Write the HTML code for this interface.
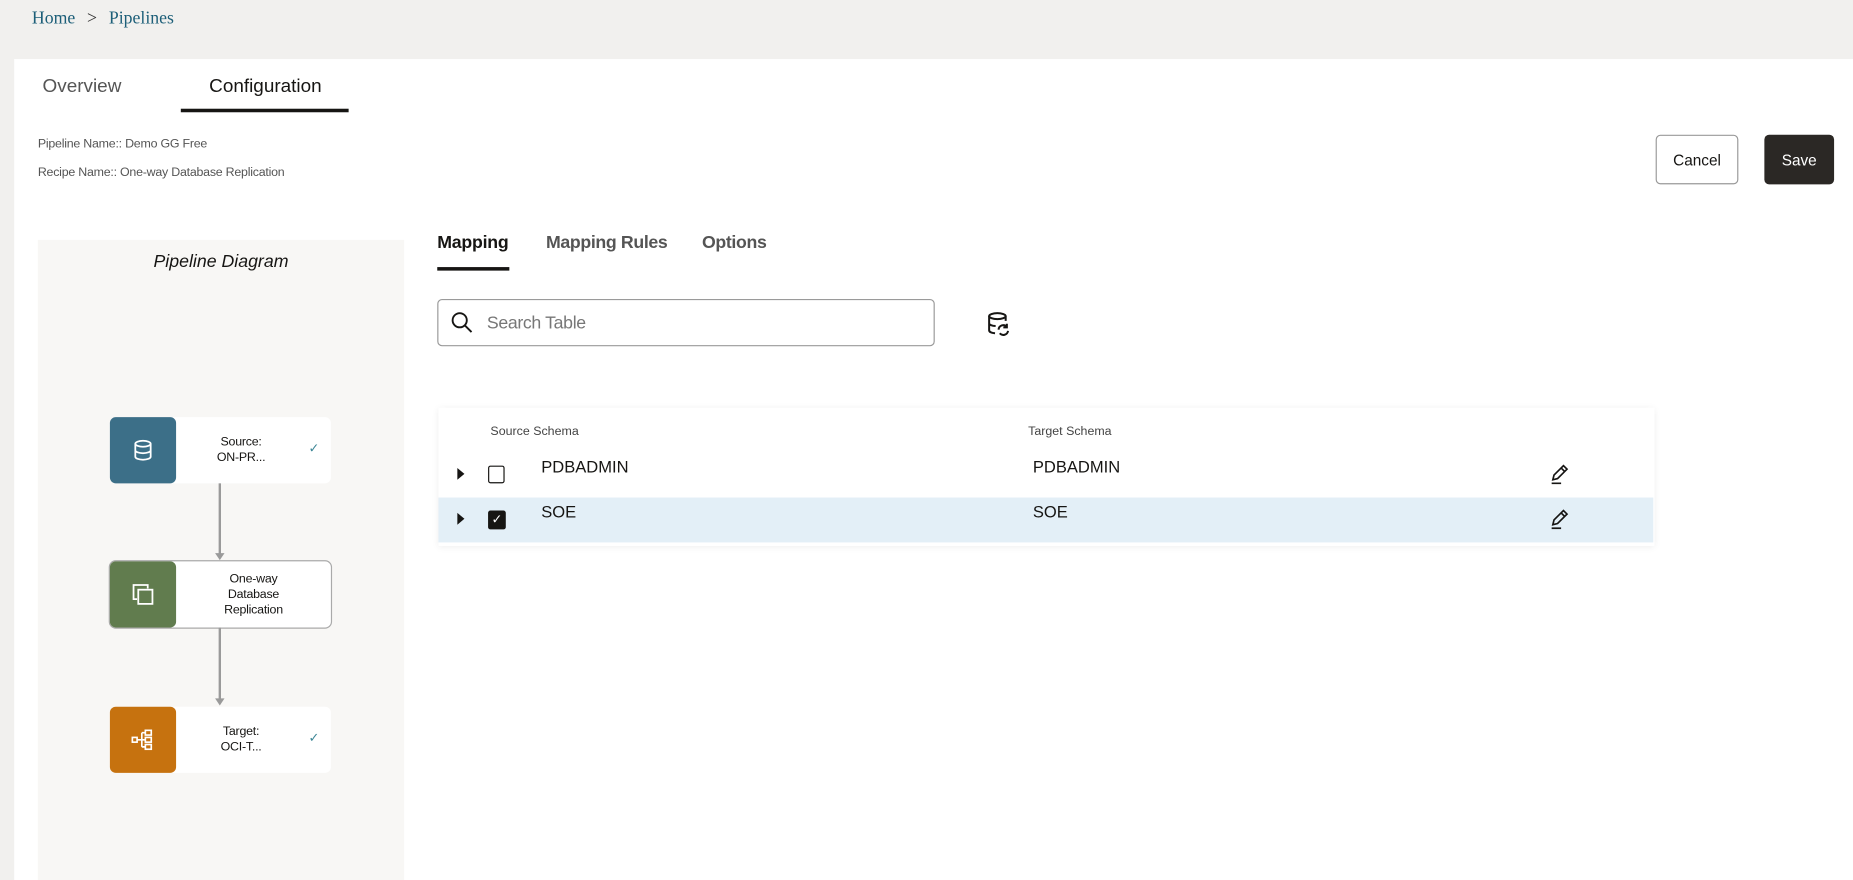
<!DOCTYPE html>
<html><head><meta charset="utf-8"><style>
html,body{margin:0;padding:0;width:1853px;height:880px;overflow:hidden;background:#f2f1ef;}
#w{position:absolute;left:0;top:0;width:1568px;height:745px;transform:scale(1.18176);transform-origin:0 0;font-family:"Liberation Sans",sans-serif;color:#161513;
background:#f1f0ee;}
.a{position:absolute;}
.panel{left:12px;top:50px;width:1556px;height:695px;background:#fff;}
.tab{font-size:16px;top:65px;}
.small{font-size:10.5px;color:#555;letter-spacing:-0.2px;}
.btn{border-radius:4px;font-size:13px;display:flex;align-items:center;justify-content:center;box-sizing:border-box;}
.node{left:93px;width:187px;height:56px;background:#fff;border-radius:5px;}
.ic{position:absolute;left:0;top:0;width:56px;height:56px;border-radius:5px;display:flex;align-items:center;justify-content:center;}
.nt{position:absolute;left:56px;width:110px;top:0;height:56px;display:flex;flex-direction:column;align-items:center;justify-content:center;font-size:10.5px;line-height:13px;text-align:center;letter-spacing:-0.2px;}
.chk{position:absolute;left:168px;top:20px;color:#3d8696;font-size:11px;}
.vl{left:185px;width:2px;background:#9a9a9a;}
.arr{left:182px;width:0;height:0;border-left:4px solid transparent;border-right:4px solid transparent;border-top:6px solid #9a9a9a;}
.row{left:371px;width:1028px;height:38px;}
.cell{position:absolute;font-size:14px;top:4px;}
</style></head><body><div id="w">
<div class="a" style="left:27px;top:8px;font-family:'Liberation Serif',serif;font-size:15px;color:#1c5e78;">Home<span style="color:#333;margin:0 10px;">&gt;</span>Pipelines</div>
<div class="a panel"></div>
<div class="a tab" style="left:36px;color:#555;">Overview</div>
<div class="a tab" style="left:177px;">Configuration</div>
<div class="a" style="left:153px;top:92px;width:142px;height:3px;background:#161513;"></div>
<div class="a small" style="left:32px;top:116px;">Pipeline Name:: Demo GG Free</div>
<div class="a small" style="left:32px;top:140px;">Recipe Name:: One-way Database Replication</div>
<div class="a btn" style="left:1401px;top:114px;width:70px;height:42px;border:1px solid #9a9a9a;">Cancel</div>
<div class="a btn" style="left:1493px;top:114px;width:59px;height:42px;background:#2b2825;color:#fff;">Save</div>

<div class="a" style="left:32px;top:203px;width:310px;height:542px;background:#f8f7f5;"></div>
<div class="a" style="left:32px;top:213px;width:310px;text-align:center;font-style:italic;font-size:15px;">Pipeline Diagram</div>
<div class="a node" style="top:353px;"><div class="ic" style="background:#3c6f88;"><svg width="20" height="20" viewBox="0 0 20 20" fill="none" stroke="#fff" stroke-width="1.5"><ellipse cx="10" cy="4.5" rx="6.5" ry="2.5"/><path d="M3.5 4.5v11c0 1.4 2.9 2.5 6.5 2.5s6.5-1.1 6.5-2.5v-11M3.5 10c0 1.4 2.9 2.5 6.5 2.5s6.5-1.1 6.5-2.5"/></svg></div><div class="nt">Source:<br>ON-PR...</div><div class="chk">✓</div></div>
<div class="a vl" style="top:409px;height:60px;"></div><div class="a arr" style="top:468px;"></div>
<div class="a node" style="top:475px;box-shadow:0 0 0 1px #aaa;"><div class="ic" style="background:#617c4e;"><svg width="18" height="18" viewBox="0 0 18 18" fill="none" stroke="#fff" stroke-width="1.5"><path d="M4 13H1V1h12v3"/><rect x="5" y="5" width="12" height="12"/></svg></div><div class="nt" style="left:56px;width:131px;">One-way<br>Database<br>Replication</div></div>
<div class="a vl" style="top:531px;height:61px;"></div><div class="a arr" style="top:591px;"></div>
<div class="a node" style="top:598px;"><div class="ic" style="background:#c6720f;"><svg width="20" height="20" viewBox="0 0 20 20" fill="none" stroke="#fff" stroke-width="1.4"><rect x="1" y="8" width="4" height="4"/><rect x="12" y="2" width="5" height="4"/><rect x="12" y="8" width="5" height="4"/><rect x="12" y="14" width="5" height="4"/><path d="M5 10h4M9 4v12M9 4h3M9 16h3M9 10h3"/></svg></div><div class="nt">Target:<br>OCI-T...</div><div class="chk">✓</div></div>

<div class="a" style="left:370px;top:197px;font-size:15px;font-weight:bold;letter-spacing:-0.2px;">Mapping</div>
<div class="a" style="left:370px;top:226px;width:61px;height:3px;background:#161513;"></div>
<div class="a" style="left:462px;top:197px;font-size:15px;color:#555;font-weight:bold;letter-spacing:-0.3px;">Mapping Rules</div>
<div class="a" style="left:594px;top:197px;font-size:15px;color:#555;font-weight:bold;letter-spacing:-0.3px;">Options</div>
<div class="a" style="left:370px;top:253px;width:421px;height:40px;border:1px solid #9a9a9a;border-radius:4px;box-sizing:border-box;"></div>
<svg class="a" style="left:381px;top:263px;" width="20" height="20" viewBox="0 0 20 20" fill="none" stroke="#161513" stroke-width="1.6"><circle cx="8" cy="8" r="6"/><path d="M12.5 12.5L18 18"/></svg>
<div class="a" style="left:412px;top:265px;font-size:15px;color:#777;letter-spacing:-0.3px;">Search Table</div>
<svg class="a" style="left:834px;top:263px;" width="22" height="22" viewBox="0 0 22 22" fill="none" stroke="#161513" stroke-width="1.7"><ellipse cx="10" cy="4.5" rx="7" ry="2.5"/><path d="M3 4.5v12c0 1.3 2 2.3 5 2.5M17 4.5v4M3 10.5c0 1.3 2.5 2.3 5.5 2.4"/><path d="M11 16a4 4 0 0 1 7-2.5M19 17a4 4 0 0 1-7 2"/><path d="M18 11v3h-3" /></svg>

<div class="a" style="left:371px;top:345px;width:1029px;height:117px;background:#fff;box-shadow:0 1px 6px rgba(0,0,0,.08);"></div>
<div class="a" style="left:415px;top:359px;font-size:10.5px;color:#444;">Source Schema</div>
<div class="a" style="left:870px;top:359px;font-size:10.5px;color:#444;">Target Schema</div>
<div class="a row" style="top:383px;">
<div class="a" style="left:16px;top:13px;border-top:5px solid transparent;border-bottom:5px solid transparent;border-left:6px solid #161513;"></div>
<div class="a" style="left:42px;top:11px;width:12px;height:13px;border:1.5px solid #161513;border-radius:2px;"></div>
<div class="cell" style="left:87px;">PDBADMIN</div><div class="cell" style="left:503px;">PDBADMIN</div>
<svg class="a" style="left:940px;top:9px;" width="18" height="18" viewBox="0 0 18 18" fill="none" stroke="#161513" stroke-width="1.4"><path d="M3 14l1-4 8-8 3 3-8 8z M10 4l3 3"/><path d="M2 17h8"/></svg></div>
<div class="a row" style="top:421px;background:#e3eff7;">
<div class="a" style="left:16px;top:13px;border-top:5px solid transparent;border-bottom:5px solid transparent;border-left:6px solid #161513;"></div>
<div class="a" style="left:42px;top:11px;width:15px;height:16px;background:#161513;border-radius:2px;color:#fff;font-size:11px;text-align:center;line-height:16px;">✓</div>
<div class="cell" style="left:87px;">SOE</div><div class="cell" style="left:503px;">SOE</div>
<svg class="a" style="left:940px;top:9px;" width="18" height="18" viewBox="0 0 18 18" fill="none" stroke="#161513" stroke-width="1.4"><path d="M3 14l1-4 8-8 3 3-8 8z M10 4l3 3"/><path d="M2 17h8"/></svg></div>
</div></body></html>
